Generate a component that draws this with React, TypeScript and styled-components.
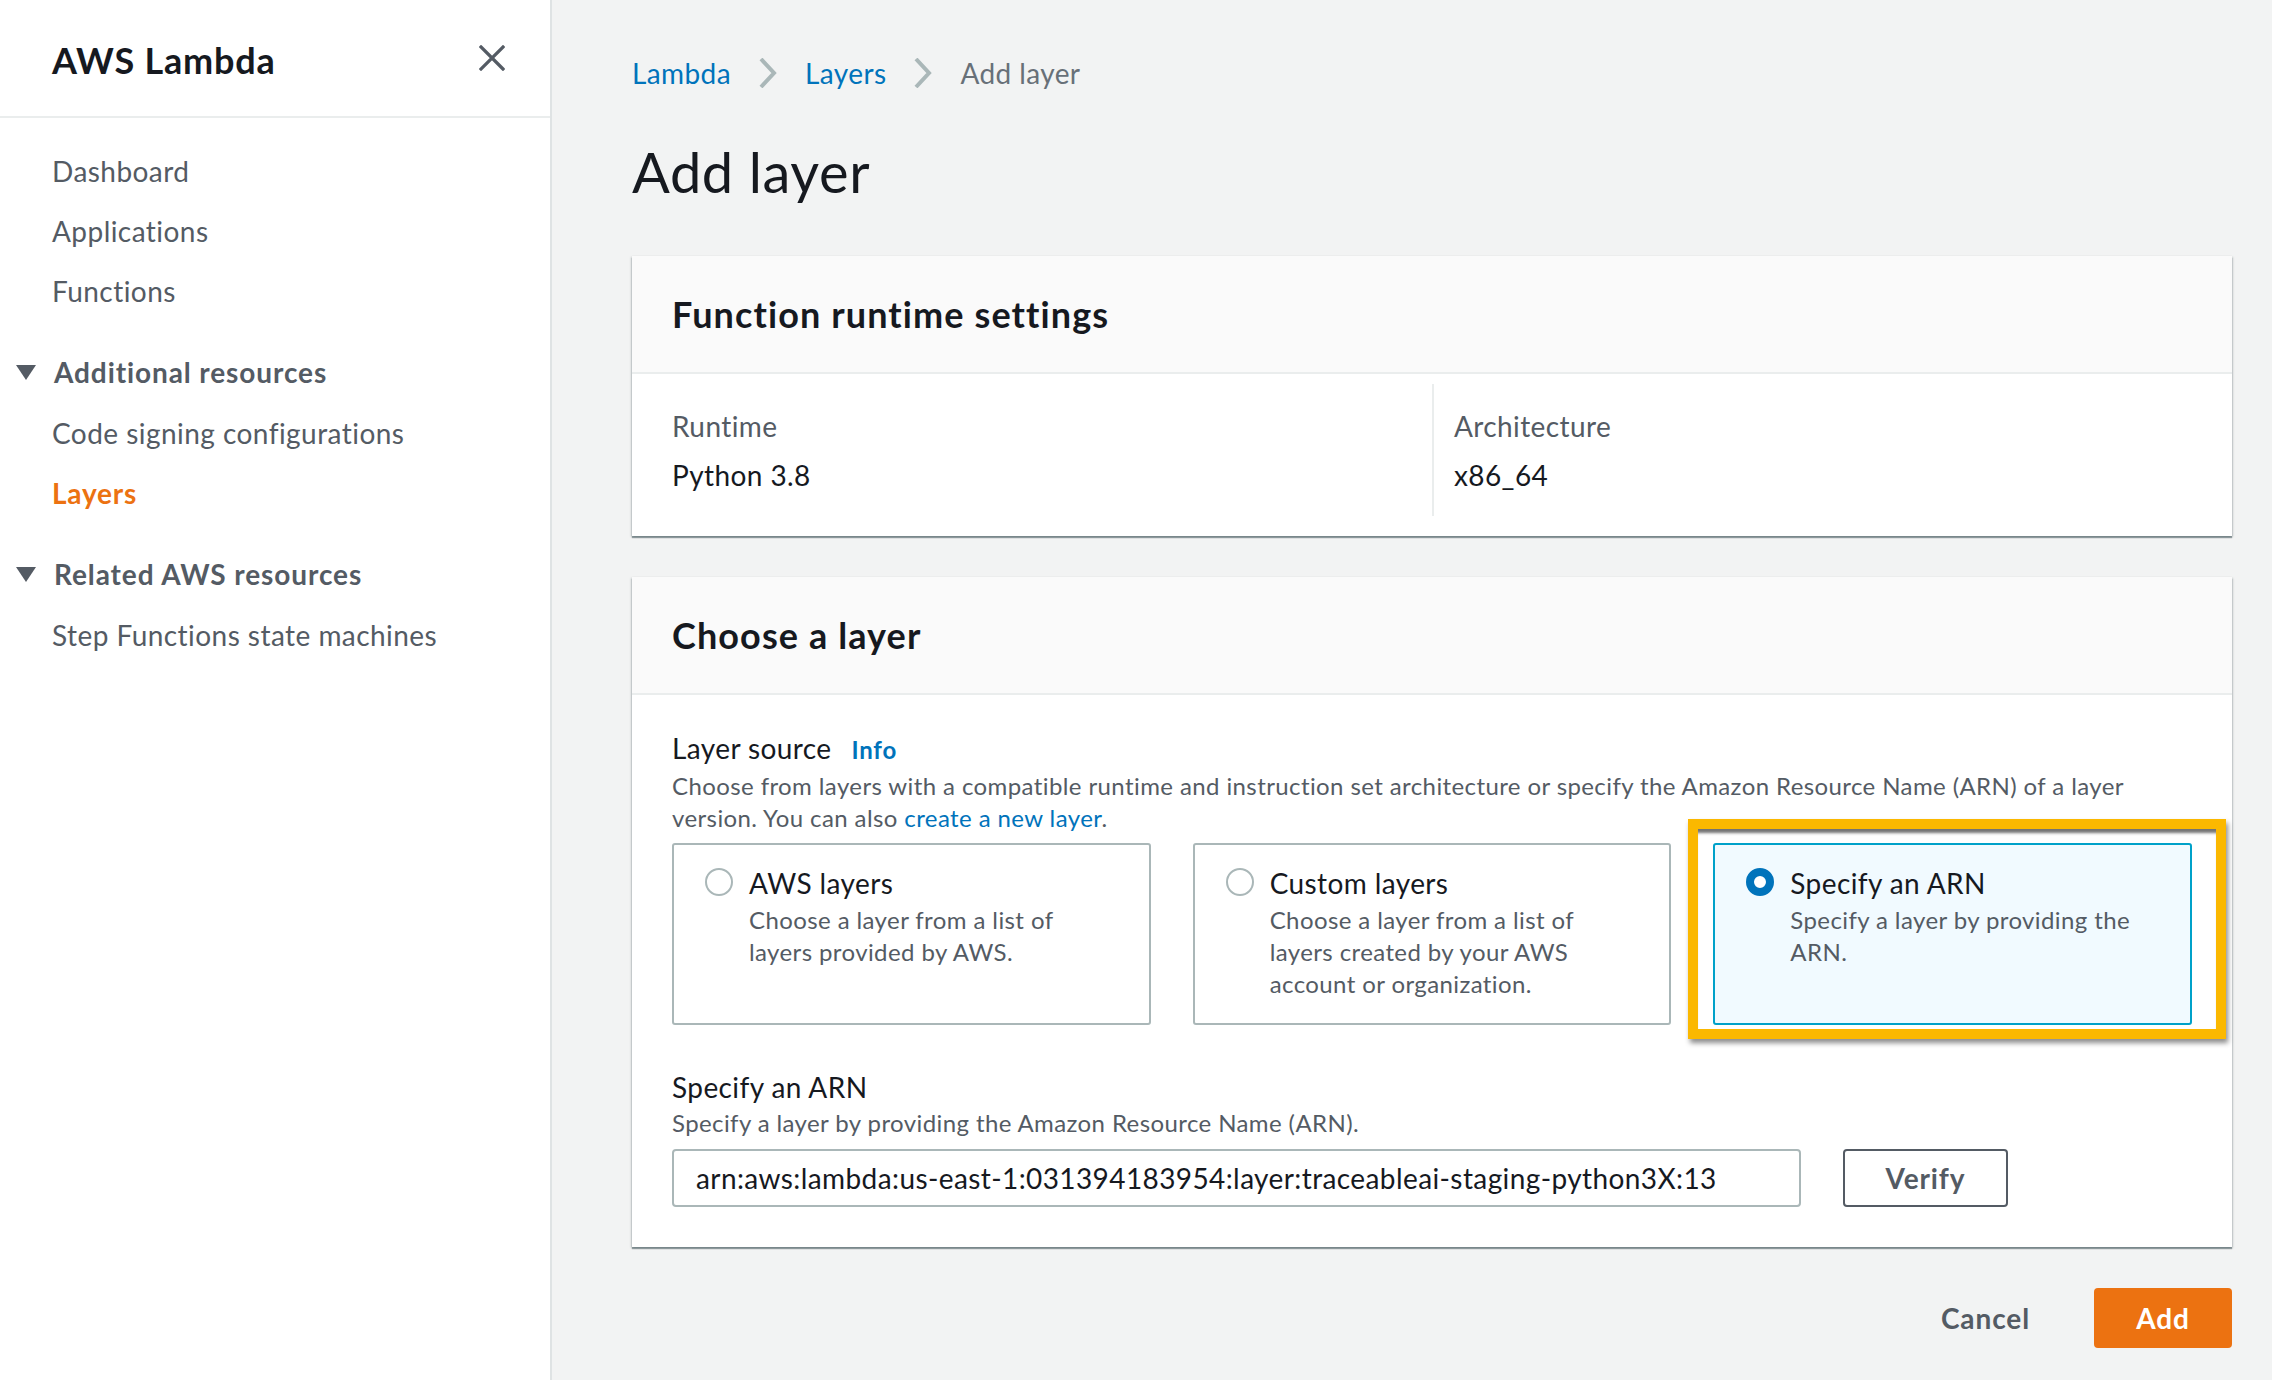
import React from "react";
import styled, { createGlobalStyle } from "styled-components";

const GlobalStyle = createGlobalStyle`
  html, body {
    margin: 0;
    padding: 0;
    background: #f2f3f3;
  }
  * {
    box-sizing: border-box;
  }
`;

const FONT = `Lato, "Open Sans", "Liberation Sans", sans-serif`;

const navItems = ["Dashboard", "Applications", "Functions"];

const radioOptions = [
  {
    title: "AWS layers",
    lines: ["Choose a layer from a list of", "layers provided by AWS."],
    checked: false,
  },
  {
    title: "Custom layers",
    lines: [
      "Choose a layer from a list of",
      "layers created by your AWS",
      "account or organization.",
    ],
    checked: false,
  },
  {
    title: "Specify an ARN",
    lines: ["Specify a layer by providing the", "ARN."],
    checked: true,
  },
];

const CloseIcon = () => (
  <svg width="26" height="26" viewBox="0 0 26 26">
    <path d="M2 2 L24 24 M24 2 L2 24" stroke="#545b64" strokeWidth="3.2" strokeLinecap="square" fill="none" />
  </svg>
);

const Caret = () => (
  <svg width="20" height="15" viewBox="0 0 20 15">
    <path d="M0 0 H20 L10 15 Z" fill="#545b64" />
  </svg>
);

const Chevron = () => (
  <svg width="18" height="30" viewBox="0 0 18 30">
    <path d="M2 1 L15 15 L2 29" stroke="#aab7b8" strokeWidth="4" fill="none" />
  </svg>
);

const Section = ({ title, children }: { title: string; children: React.ReactNode }) => (
  <>
    <SectionHeading>
      <Caret />
      <span>{title}</span>
    </SectionHeading>
    {children}
  </>
);

export default function App() {
  return (
    <Page>
      <GlobalStyle />
      <Sidebar>
        <SidebarHeader>
          <SidebarTitle>AWS Lambda</SidebarTitle>
          <CloseButton aria-label="Close">
            <CloseIcon />
          </CloseButton>
        </SidebarHeader>
        <Nav>
          {navItems.map((item) => (
            <NavItem key={item}>{item}</NavItem>
          ))}
          <Section title="Additional resources">
            <NavItem>Code signing configurations</NavItem>
            <NavItem $active>Layers</NavItem>
          </Section>
          <Section title="Related AWS resources">
            <NavItem>Step Functions state machines</NavItem>
          </Section>
        </Nav>
      </Sidebar>

      <Main>
        <Breadcrumbs>
          <Crumb>Lambda</Crumb>
          <Chevron />
          <Crumb>Layers</Crumb>
          <Chevron />
          <Crumb $current>Add layer</Crumb>
        </Breadcrumbs>

        <PageTitle>Add layer</PageTitle>

        <Card>
          <CardHeader>
            <CardTitle>Function runtime settings</CardTitle>
          </CardHeader>
          <SettingsBody>
            <SettingsColumn>
              <SettingLabel>Runtime</SettingLabel>
              <SettingValue>Python 3.8</SettingValue>
            </SettingsColumn>
            <SettingsColumn $divided>
              <SettingLabel>Architecture</SettingLabel>
              <SettingValue>x86_64</SettingValue>
            </SettingsColumn>
          </SettingsBody>
        </Card>

        <Card $spaced>
          <CardHeader>
            <CardTitle>Choose a layer</CardTitle>
          </CardHeader>
          <LayerBody>
            <FieldLabel>
              Layer source <InfoLink>Info</InfoLink>
            </FieldLabel>
            <FieldDesc>
              Choose from layers with a compatible runtime and instruction set architecture or specify
              the Amazon Resource Name (ARN) of a layer
              <br />
              version. You can also <TextLink>create a new layer</TextLink>.
            </FieldDesc>

            <RadioGrid>
              {radioOptions.map((opt) => (
                <RadioCard key={opt.title} $checked={opt.checked}>
                  <Radio $checked={opt.checked} />
                  <RadioText>
                    <RadioTitle>{opt.title}</RadioTitle>
                    <RadioDesc>
                      {opt.lines.map((line, i) => (
                        <span key={i}>
                          {line}
                          {i < opt.lines.length - 1 && <br />}
                        </span>
                      ))}
                    </RadioDesc>
                  </RadioText>
                </RadioCard>
              ))}
            </RadioGrid>

            <FieldLabel $top>Specify an ARN</FieldLabel>
            <FieldDesc>Specify a layer by providing the Amazon Resource Name (ARN).</FieldDesc>
            <InputRow>
              <ArnInput
                readOnly
                defaultValue="arn:aws:lambda:us-east-1:031394183954:layer:traceableai-staging-python3X:13"
              />
              <VerifyButton>Verify</VerifyButton>
            </InputRow>
          </LayerBody>
        </Card>

        <Footer>
          <CancelButton>Cancel</CancelButton>
          <AddButton>Add</AddButton>
        </Footer>
      </Main>
    </Page>
  );
}

const Page = styled.div`
  /* Layout */
  display: flex;
  height: 100vh;
  overflow: hidden;
  /* Color */
  background: #f2f3f3;
  font-family: ${FONT};
  letter-spacing: 0.4px;
  color: #16191f;
`;

const Sidebar = styled.aside`
  /* Layout */
  flex: 0 0 552px;
  /* Color */
  background: #ffffff;
  border-right: 2px solid #dfe3e4;
`;

const SidebarHeader = styled.div`
  /* Layout */
  display: flex;
  align-items: center;
  justify-content: space-between;
  /* Size */
  height: 118px;
  padding: 4px 45px 0 52px;
  /* Color */
  border-bottom: 2px solid #eaeded;
`;

const SidebarTitle = styled.div`
  font-size: 36px;
  font-weight: 700;
  letter-spacing: 0.8px;
  color: #16191f;
`;

const CloseButton = styled.button`
  /* Layout */
  display: flex;
  /* Size */
  padding: 0;
  margin-top: -4px;
  /* Other */
  background: none;
  border: none;
`;

const Nav = styled.nav`
  display: flex;
  flex-direction: column;
  padding-top: 23px;
`;

const NavItem = styled.a<{ $active?: boolean }>`
  /* Layout */
  display: flex;
  align-items: center;
  /* Size */
  height: 60px;
  padding-left: 52px;
  font-size: 28px;
  font-weight: ${(p) => (p.$active ? 700 : 400)};
  letter-spacing: ${(p) => (p.$active ? "0.8px" : "0.45px")};
  /* Color */
  color: ${(p) => (p.$active ? "#ec7211" : "#545b64")};
  text-decoration: none;
`;

const SectionHeading = styled.div`
  /* Layout */
  display: flex;
  align-items: center;
  gap: 18px;
  /* Size */
  height: 62px;
  margin-top: 20px;
  padding-left: 16px;
  font-size: 28px;
  font-weight: 700;
  letter-spacing: 0.9px;
  /* Color */
  color: #545b64;
`;

const Main = styled.main`
  /* Layout */
  flex: 1;
  min-width: 0;
  /* Size */
  padding: 53px 40px 0 80px;
`;

const Breadcrumbs = styled.div`
  display: flex;
  align-items: center;
  gap: 28px;
  height: 40px;
`;

const Crumb = styled.a<{ $current?: boolean }>`
  font-size: 28px;
  color: ${(p) => (p.$current ? "#687078" : "#0073bb")};
  text-decoration: none;
`;

const PageTitle = styled.h1`
  /* Size */
  margin: 45px 0 50px 0;
  font-size: 56px;
  line-height: 68px;
  font-weight: 400;
  letter-spacing: 0.6px;
  /* Color */
  color: #16191f;
`;

const Card = styled.section<{ $spaced?: boolean }>`
  /* Size */
  margin-top: ${(p) => (p.$spaced ? "41px" : "0")};
  /* Color */
  background: #ffffff;
  box-shadow: 0 2px 1px 0 rgba(0, 28, 36, 0.35), 1px 1px 2px 0 rgba(0, 28, 36, 0.18),
    -1px 1px 2px 0 rgba(0, 28, 36, 0.18);
`;

const CardHeader = styled.header`
  /* Layout */
  display: flex;
  align-items: center;
  /* Size */
  height: 118px;
  padding: 0 40px;
  /* Color */
  background: #fafafa;
  border-bottom: 2px solid #eaeded;
`;

const CardTitle = styled.h2`
  margin: 0;
  font-size: 36px;
  font-weight: 700;
  letter-spacing: 1.1px;
  color: #16191f;
`;

const SettingsBody = styled.div`
  display: grid;
  grid-template-columns: 1fr 1fr;
  padding: 10px 40px 20px 40px;
`;

const SettingsColumn = styled.div<{ $divided?: boolean }>`
  padding: 22px 0 21px ${(p) => (p.$divided ? "20px" : "0")};
  border-left: ${(p) => (p.$divided ? "2px solid #eaeded" : "none")};
`;

const SettingLabel = styled.div`
  font-size: 28px;
  line-height: 40px;
  color: #545b64;
`;

const SettingValue = styled.div`
  margin-top: 9px;
  font-size: 28px;
  line-height: 40px;
  color: #16191f;
`;

const LayerBody = styled.div`
  padding: 33px 40px 40px 40px;
`;

const FieldLabel = styled.div<{ $top?: boolean }>`
  /* Layout */
  display: flex;
  align-items: baseline;
  gap: 20px;
  /* Size */
  margin-top: ${(p) => (p.$top ? "42px" : "0")};
  font-size: 28px;
  line-height: 40px;
  /* Color */
  color: #16191f;
`;

const InfoLink = styled.a`
  font-size: 24px;
  font-weight: 700;
  letter-spacing: 0.8px;
  color: #0073bb;
`;

const FieldDesc = styled.div`
  font-size: 24px;
  line-height: 32px;
  color: #545b64;
  white-space: nowrap;
`;

const TextLink = styled.a`
  color: #0073bb;
`;

const RadioGrid = styled.div`
  display: grid;
  grid-template-columns: repeat(3, 1fr);
  gap: 42px;
  margin-top: 9px;
`;

const RadioCard = styled.label<{ $checked?: boolean }>`
  /* Layout */
  position: relative;
  display: flex;
  align-items: flex-start;
  gap: 16px;
  /* Size */
  padding: 18px 20px 23px 31px;
  /* Color */
  background: ${(p) => (p.$checked ? "#f1faff" : "#ffffff")};
  border: 2px solid ${(p) => (p.$checked ? "#00a1c9" : "#aab7b8")};
  border-radius: 3px;

  /* highlight frame drawn over the selected option */
  &::after {
    content: "";
    display: ${(p) => (p.$checked ? "block" : "none")};
    position: absolute;
    left: -27px;
    top: -26px;
    right: -36px;
    bottom: -16px;
    border: 10px solid #fbb800;
    box-shadow: 2px 4px 5px rgba(0, 0, 0, 0.45), inset 0 6px 3px -2px rgba(0, 0, 0, 0.55);
    pointer-events: none;
  }
`;

const Radio = styled.span<{ $checked?: boolean }>`
  /* Size */
  flex: 0 0 28px;
  width: 28px;
  height: 28px;
  margin-top: 5px;
  /* Color */
  background: #ffffff;
  border: ${(p) => (p.$checked ? "8px solid #0073bb" : "2px solid #aab7b8")};
  border-radius: 50%;
`;

const RadioText = styled.div`
  display: flex;
  flex-direction: column;
  gap: 1px;
`;

const RadioTitle = styled.div`
  font-size: 28px;
  line-height: 40px;
  color: #16191f;
`;

const RadioDesc = styled.div`
  font-size: 24px;
  line-height: 32px;
  color: #545b64;
`;

const InputRow = styled.div`
  display: flex;
  gap: 42px;
  margin-top: 10px;
`;

const ArnInput = styled.input`
  /* Size */
  flex: 0 1 1129px;
  height: 58px;
  padding: 0 22px;
  font-family: ${FONT};
  font-size: 28px;
  letter-spacing: 0.4px;
  /* Color */
  color: #16191f;
  background: #ffffff;
  border: 2px solid #aab7b8;
  border-radius: 4px;
  outline: none;
`;

const VerifyButton = styled.button`
  /* Size */
  width: 165px;
  height: 58px;
  font-family: ${FONT};
  font-size: 28px;
  font-weight: 700;
  letter-spacing: 0.9px;
  /* Color */
  color: #545b64;
  background: #ffffff;
  border: 2px solid #545b64;
  border-radius: 4px;
`;

const Footer = styled.div`
  display: flex;
  justify-content: flex-end;
  align-items: center;
  margin-top: 41px;
`;

const CancelButton = styled.button`
  /* Size */
  height: 60px;
  padding: 0 32px;
  margin-right: 32px;
  font-family: ${FONT};
  font-size: 28px;
  font-weight: 700;
  letter-spacing: 0.9px;
  /* Color */
  color: #545b64;
  background: none;
  border: none;
`;

const AddButton = styled.button`
  /* Size */
  width: 138px;
  height: 60px;
  font-family: ${FONT};
  font-size: 28px;
  font-weight: 700;
  letter-spacing: 0.9px;
  /* Color */
  color: #ffffff;
  background: #ec7211;
  border: none;
  border-radius: 4px;
`;
